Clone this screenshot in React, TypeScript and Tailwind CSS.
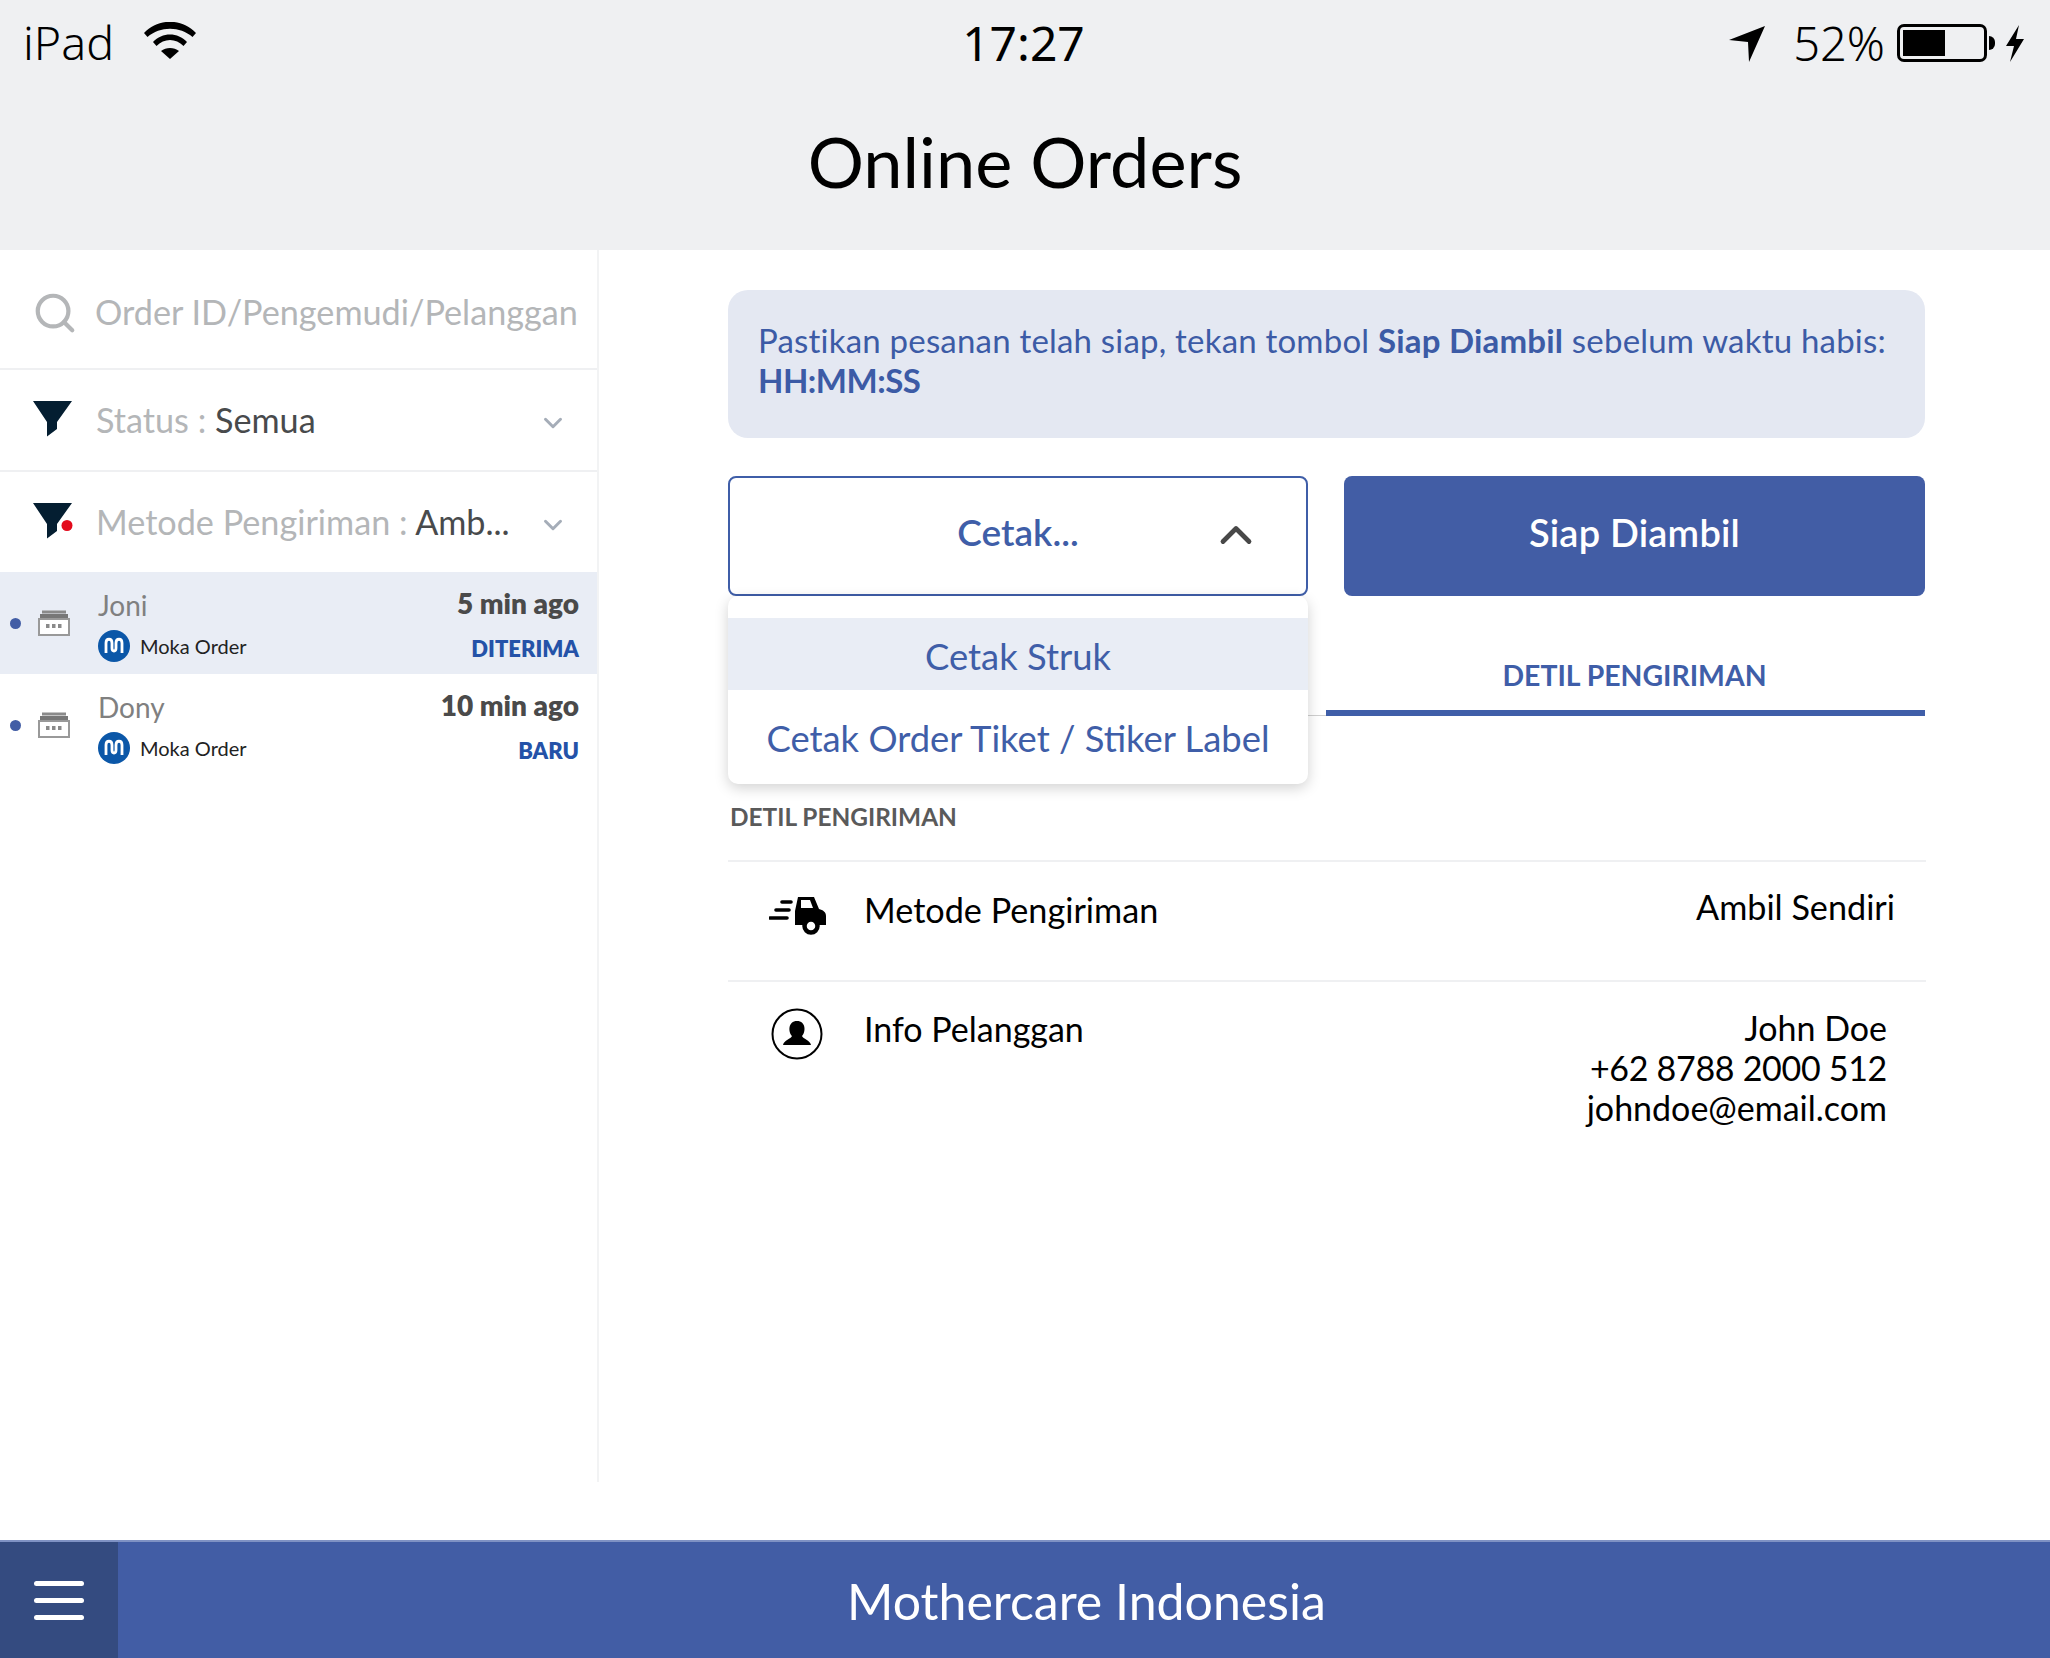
import { ChevronDown, ChevronUp, Search } from "lucide-react";

const lato = "font-['Lato','Liberation_Sans',sans-serif]";

const Funnel = ({ dot }: { dot?: boolean }) => (
  <svg width="42" height="38" viewBox="0 0 42 38" className="shrink-0">
    <path d="M1 2H40L25 23V30L15 37.5V23Z" fill="#041e31" />
    {dot && (
      <>
        <circle cx="35" cy="24.5" r="8" fill="#fff" />
        <circle cx="35" cy="24.5" r="5.5" fill="#e30a1c" />
      </>
    )}
  </svg>
);

const StoreIcon = () => (
  <svg width="32" height="26" viewBox="0 0 32 26" className="shrink-0">
    <rect x="4" y="0.5" width="24" height="3" fill="#8a8a8a" />
    <rect x="2" y="4" width="28" height="5" fill="#777" />
    <rect x="1" y="9" width="30" height="16" fill="#fff" stroke="#999" strokeWidth="2" />
    <rect x="8" y="14" width="3.5" height="4" fill="#8a8a8a" />
    <rect x="14" y="14" width="3.5" height="4" fill="#8a8a8a" />
    <rect x="20" y="14" width="3.5" height="4" fill="#8a8a8a" />
  </svg>
);

const MokaLogo = () => (
  <svg width="32" height="32" viewBox="0 0 32 32" className="shrink-0">
    <circle cx="16" cy="16" r="16" fill="#0b57a8" />
    <path
      d="M8 23V13C8 8 14 8 14 13V18C14 22 18 22 18 18V13C18 8 24 8 24 13V23"
      fill="none"
      stroke="#fff"
      strokeWidth="2.8"
    />
  </svg>
);

const OrderRow = ({
  name,
  time,
  status,
  active,
}: {
  name: string;
  time: string;
  status: string;
  active?: boolean;
}) => (
  <div className={`flex h-[102px] items-center pl-[10px] pr-[18px] ${active ? "bg-[#e9edf5]" : "bg-white"}`}>
    <div className="h-[11px] w-[11px] shrink-0 rounded-full bg-[#425da5]" />
    <div className="ml-[17px]">
      <StoreIcon />
    </div>
    <div className="ml-[28px] flex-1">
      <div className="flex items-center justify-between">
        <span className="pt-[6px] text-[28px] leading-[36px] text-[#808080]">{name}</span>
        <span className="pt-[1px] text-[28px] leading-[36px] font-extrabold text-[#4a4a4a]">{time}</span>
      </div>
      <div className="mt-[4px] flex items-center justify-between">
        <div className="flex items-center gap-[10px]">
          <MokaLogo />
          <span className="text-[20px] text-[#222]">Moka Order</span>
        </div>
        <span className="mt-[5px] text-[22px] font-extrabold text-[#2452a8]">{status}</span>
      </div>
    </div>
  </div>
);

const FilterRow = ({ label, value, dot }: { label: string; value: string; dot?: boolean }) => (
  <div className={`flex items-center pl-[32px] pr-[29px] ${dot ? "h-[100px]" : "h-[102px] border-b-2 border-[#eff0f2]"}`}>
    <div className="-mt-[4px]">
      <Funnel dot={dot} />
    </div>
    <div className="ml-[22px] flex-1 text-[34.2px] text-[#b4b6b8]">
      {label} : <span className="text-[#484a4c]">{value}</span>
    </div>
    <ChevronDown size={30} strokeWidth={2.4} className="mt-[6px] text-[#a5adb8]" />
  </div>
);

export default function App() {
  return (
    <div className={`flex h-[1658px] w-[2050px] flex-col overflow-hidden bg-white ${lato}`}>
      {/* Status bar + title */}
      <header className="flex h-[250px] shrink-0 flex-col bg-[#eff0f2] text-black">
        <div className="flex h-[86px] items-center justify-between pl-[23px] pr-[26px] font-['Noto_Sans',sans-serif] text-[47px] font-light">
          <div className="flex w-[500px] items-center gap-[30px]">
            <span className="text-[46.5px]">iPad</span>
            <svg width="52" height="37" viewBox="0 0 52 37" className="-mt-[6px]">
              <path d="M0 11C14 -4 38 -4 52 11L48.5 15C36 4 16 4 3.5 15Z" />
              <path d="M9 20C18 10 34 10 43 20L39.5 24C32 16 20 16 12.5 24Z" />
              <path d="M17 29C22 25 30 25 35 29L26 37Z" />
            </svg>
          </div>
          <span className="text-[48px] font-normal">17:27</span>
          <div className="flex w-[500px] items-center justify-end">
            <svg width="36" height="38" viewBox="0 0 36 38" className="mt-[2px]">
              <path d="M0 15L36 1L20 37L19 17Z" />
            </svg>
            <span className="ml-[28px]">52%</span>
            <div className="ml-[12px] flex h-[38px] w-[90px] items-center rounded-[7px] border-[3px] border-black p-[3px]">
              <div className="h-full w-[42px] bg-black" />
            </div>
            <div className="ml-[2px] h-[14px] w-[6px] rounded-r-full bg-black" />
            <svg width="18" height="37" viewBox="0 0 18 37" className="ml-[11px]">
              <path d="M13 0L0 21H8L4 37L18 14H10Z" />
            </svg>
          </div>
        </div>
        <h1 className="mt-[30px] text-center text-[70.3px] leading-[90px] font-normal">Online Orders</h1>
      </header>

      <div className="flex flex-1">
        {/* Sidebar */}
        <aside className="h-[1232px] w-[599px] shrink-0 border-r-2 border-[#f2f3f4]">
          <div className="flex h-[120px] items-center border-b-2 border-[#eff0f2] pl-[32px]">
            <Search size={46} strokeWidth={2.2} className="mt-[8px] text-[#b4b6b8]" />
            <span className="ml-[17px] pt-[5px] text-[34.2px] text-[#b4b6b8]">Order ID/Pengemudi/Pelanggan</span>
          </div>
          <FilterRow label="Status" value="Semua" />
          <FilterRow label="Metode Pengiriman" value="Amb..." dot />
          <OrderRow name="Joni" time="5 min ago" status="DITERIMA" active />
          <OrderRow name="Dony" time="10 min ago" status="BARU" />
        </aside>

        {/* Main */}
        <main className="flex-1 pt-[40px] pl-[129px] pr-[125px]">
          <div className="h-[148px] rounded-[20px] bg-[#e4e8f2] px-[30px] pt-[30px] text-[33px] leading-[40px] tracking-[0.2px] text-[#3c5ba6]">
            Pastikan pesanan telah siap, tekan tombol <b>Siap Diambil</b> sebelum waktu habis:
            <br />
            <b className="tracking-[-0.5px]">HH:MM:SS</b>
          </div>

          <div className="relative mt-[38px] flex gap-[36px]">
            <div className="relative flex h-[120px] w-[580px] items-center justify-center rounded-[8px] border-2 border-[#3f5ea8] pb-[8px] text-[37px] font-semibold text-[#3f5ea8]">
              Cetak...
              <ChevronUp size={52} strokeWidth={2.2} className="absolute right-[44px] top-[31px] text-[#484848]" />
            </div>
            <div className="flex h-[120px] flex-1 items-center justify-center rounded-[8px] bg-[#425da5] pb-[8px] text-[38px] font-semibold tracking-[0.2px] text-white">
              Siap Diambil
            </div>

            {/* Open menu */}
            <div className="absolute left-0 top-[120px] z-10 h-[188px] w-[580px] rounded-[10px] bg-white pt-[22px] text-center text-[36.4px] text-[#3f5ea8] shadow-[0_4px_14px_rgba(0,0,0,0.18)]">
              <div className="flex h-[72px] items-center justify-center bg-[#e9edf5] pt-[4px]">Cetak Struk</div>
              <div className="flex h-[94px] items-center justify-center pt-[2px]">Cetak Order Tiket / Stiker Label</div>
            </div>
          </div>

          {/* Tabs */}
          <div className="flex h-[120px] border-b border-[#cfcfcf]">
            <div className="flex-1" />
            <div className="-mb-px flex w-[599px] items-center justify-center border-b-[6px] border-[#3f5ea8] pt-[44px] pl-[18px] text-[28.4px] font-bold text-[#3f5ea8]">
              DETIL PENGIRIMAN
            </div>
          </div>

          <div className="pt-[86px] pl-[2px] text-[24.4px] leading-[30px] font-bold text-[#5a5a5a]">DETIL PENGIRIMAN</div>

          <div className="mt-[28px] -mr-px flex h-[120px] items-start justify-between border-t-2 border-[#eff0f2] pt-[19px] pl-[41px] pr-[31px] text-[34.2px] text-black">
            <div className="flex items-start">
              <svg width="58" height="42" viewBox="0 0 58 42" className="mt-[14px]">
                <path d="M13 7H22M7 15H20M1 23H18" stroke="#000" strokeWidth="3.6" fill="none" strokeLinecap="round" />
                <path
                  d="M29 2H45L50 14C54 15 57 17 57 21V30H50C49 22 35 22 34 30H26V16Z M32 5V13H44L41 5Z"
                  fillRule="evenodd"
                />
                <circle cx="42" cy="31" r="6.5" fill="#fff" stroke="#000" strokeWidth="4.5" />
              </svg>
              <span className="ml-[37px] mt-[3px]">Metode Pengiriman</span>
            </div>
            <span>Ambil Sendiri</span>
          </div>

          <div className="-mr-px flex items-start justify-between border-t-2 border-[#eff0f2] pt-[27px] pl-[43px] pr-[39px] text-[34px] leading-[40px] text-black">
            <div className="flex items-start">
              <svg width="52" height="52" viewBox="0 0 52 52" className="-mt-[1px] shrink-0">
                <circle cx="26" cy="26" r="24.5" fill="none" stroke="#000" strokeWidth="2" />
                <path d="M12 37C13 32 20 31 21 28C17 24 17 13 26 13C35 13 35 24 31 28C32 31 39 32 40 37Z" />
              </svg>
              <span className="ml-[41px]">Info Pelanggan</span>
            </div>
            <div className="-mt-[1px] text-right">
              John Doe
              <br />
              <span className="tracking-[-0.3px]">+62 8788 2000 512</span>
              <br />
              johndoe@email.com
            </div>
          </div>
        </main>
      </div>

      {/* Footer */}
      <footer className="flex h-[118px] shrink-0 items-center border-t-2 border-[#7f92c4] bg-[#425da5] text-white">
        <div className="flex h-full w-[118px] flex-col items-center justify-center gap-[12px] bg-[#344b80]">
          <div className="h-[5px] w-[50px] rounded-sm bg-white" />
          <div className="h-[5px] w-[50px] rounded-sm bg-white" />
          <div className="h-[5px] w-[50px] rounded-sm bg-white" />
        </div>
        <div className="flex-1 pt-[2px] pl-[729px] text-[50px] leading-none">
          Mothercare Indonesia
        </div>
      </footer>
    </div>
  );
}
